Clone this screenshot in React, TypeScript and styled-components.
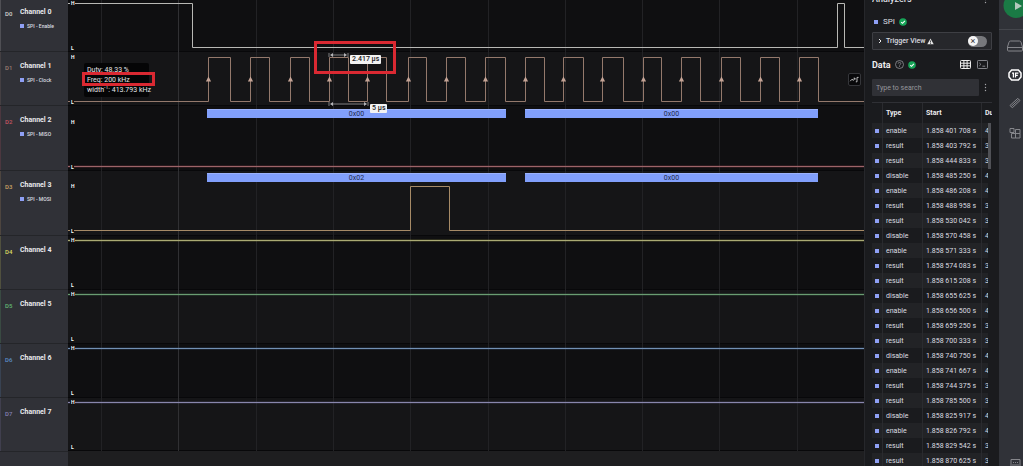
import React from "react";
import styled, { createGlobalStyle } from "styled-components";

const GlobalStyle = createGlobalStyle`
  * { box-sizing: border-box; }
  body { margin: 0; background: #101113; color: #dcdde0; font-family: Roboto, "Liberation Sans", sans-serif; font-size: 7px; }
  button, input { font: inherit; color: inherit; }
`;

const Shell = styled.main`
  display: grid;
  grid-template-columns: 68px minmax(0, 1fr) 135px 24px;
  height: 100vh;
  overflow: hidden;
`;

const Channels = styled.aside`
  background: #303137;
  overflow: hidden;
`;

const ChannelRow = styled.section<{ $tint: string; $tall?: boolean; $first?: boolean }>`
  display: grid;
  grid-template-columns: 20px 1fr;
  align-content: start;
  row-gap: 3px;
  height: ${(p) => (p.$first ? 52 : p.$tall ? 65 : 54)}px;
  padding-top: ${(p) => (p.$first ? 6 : 8)}px;
  border-bottom: 1px solid #242529;
  box-shadow: inset 1px 0 ${(p) => p.$tint}30;
  line-height: 13px;
`;

const ChannelId = styled.span<{ $tint: string }>`
  padding: 1px 0 0 5px;
  font-size: 6px;
  font-weight: 500;
  color: ${(p) => p.$tint};
`;

const ChannelName = styled.h2`
  margin: 0;
  font-size: 7px;
  font-weight: 700;
  white-space: nowrap;
  color: #e8e9ec;
`;

const ChannelTag = styled.div`
  grid-column: 2;
  display: flex;
  align-items: center;
  gap: 3px;
  font-size: 5px;
  font-weight: 500;
  line-height: 6px;
  white-space: nowrap;
`;

const Dot = styled.span<{ $size?: number }>`
  flex: none;
  width: ${(p) => p.$size ?? 4}px;
  height: ${(p) => p.$size ?? 4}px;
  background: #8fa0f5;
`;

const Graph = styled.section`
  position: relative;
  overflow: hidden;
  background: #1e1e20;
`;

const Plot = styled.svg`
  display: block;
  width: 100%;
  height: 100%;
  font-family: Roboto, "Liberation Sans", sans-serif;
`;

const Measure = styled.div`
  position: absolute;
  top: 63px;
  left: 16px;
  width: 65px;
  height: 34px;
  padding: 2px 3px;
  border-radius: 2px;
  background: #050506;
  color: #e6e6e8;
  font-size: 7px;
  line-height: 10px;
  white-space: nowrap;
  sup { font-size: 5px; line-height: 0; }
`;

const Mark = styled.div<{ $x: number; $y: number; $w: number; $h: number }>`
  position: absolute;
  left: ${(p) => p.$x}px;
  top: ${(p) => p.$y}px;
  width: ${(p) => p.$w}px;
  height: ${(p) => p.$h}px;
  border: 3px solid #da2932;
`;

const Tip = styled.div<{ $x: number; $y: number }>`
  position: absolute;
  left: ${(p) => p.$x}px;
  top: ${(p) => p.$y}px;
  padding: 0 2px;
  border-radius: 1px;
  background: #f3f3f3;
  color: #18181a;
  font-size: 7px;
  font-weight: 500;
  line-height: 9px;
  white-space: nowrap;
`;

const EdgeButton = styled.button`
  position: absolute;
  top: 73px;
  right: 3px;
  width: 13px;
  height: 13px;
  padding: 0;
  border: 1px solid #35363a;
  border-radius: 2px;
  background: #08080a;
  svg { display: block; }
`;

const Panel = styled.aside`
  display: flex;
  flex-direction: column;
  padding-left: 7px;
  border-left: 1px solid #26272b;
  background: #1a1b1e;
  overflow: hidden;
`;

const PanelHead = styled.header`
  display: flex;
  flex: none;
  align-items: flex-end;
  justify-content: space-between;
  height: 4px;
  padding-right: 12px;
  overflow: hidden;
  h2 { margin: 0; font-size: 9px; line-height: 10px; font-weight: 500; }
`;

const IconButton = styled.button`
  display: flex;
  align-items: center;
  justify-content: center;
  padding: 0;
  border: 0;
  background: none;
`;

const Analyzer = styled.div`
  display: flex;
  flex: none;
  align-items: center;
  gap: 4px;
  height: 28px;
  padding: 8px 0 0 2px;
  font-size: 8px;
  line-height: 12px;
  ${Dot} { margin-right: 1px; }
`;

const Trigger = styled.div`
  display: flex;
  flex: none;
  align-items: center;
  height: 18px;
  margin-right: 7px;
  padding: 0 4px 0 5px;
  border: 1px solid #3e3f44;
  border-radius: 1px;
  background: #26272b;
`;

const TriggerButton = styled.button`
  display: flex;
  flex: 1;
  align-items: center;
  gap: 4px;
  padding: 0;
  border: 0;
  background: none;
  font-size: 7px;
  font-weight: 500;
  white-space: nowrap;
  span { margin-right: -2px; }
`;

const Toggle = styled.input`
  appearance: none;
  display: grid;
  align-items: center;
  width: 19px;
  height: 11px;
  margin: 0;
  border-radius: 6px;
  background: #77787c;
  &::before {
    content: "×";
    width: 10px;
    height: 10px;
    border-radius: 50%;
    background: #f4f4f4;
    color: #333;
    font-size: 9px;
    line-height: 10px;
    text-align: center;
  }
`;

const DataHead = styled.div`
  display: flex;
  flex: none;
  align-items: center;
  gap: 4px;
  height: 29px;
  padding-right: 11px;
  h2 { margin: 0; font-size: 9px; font-weight: 700; color: #eee; }
`;

const Views = styled.div`
  display: flex;
  gap: 6px;
  margin-left: auto;
`;

const Search = styled.div`
  display: flex;
  flex: none;
  gap: 5px;
  padding-right: 12px;
  input {
    flex: 1;
    min-width: 0;
    height: 17px;
    padding: 0 4px;
    border: 0;
    border-radius: 1px;
    background: #303136;
    font-size: 7px;
    &::placeholder { color: #96979c; opacity: 1; }
  }
`;

const TableWrap = styled.div`
  position: relative;
  flex: 1;
  margin: 6px 7px 0 0;
  border-top: 1px solid #2f3035;
  overflow: hidden;
`;

const Thumb = styled.div`
  position: absolute;
  top: 20px;
  right: 1px;
  width: 3px;
  height: 46px;
  background: #505156;
`;

const Table = styled.table`
  width: 100%;
  table-layout: fixed;
  border-collapse: separate;
  border-spacing: 0;
  line-height: 12px;
  white-space: nowrap;
  th, td { height: 15px; padding: 0 0 0 3px; overflow: hidden; text-align: left; border-left: 1px solid #2a2b2f; }
  th:first-child, td:first-child { border-left: 0; }
  th { height: 20px; font-weight: 700; color: #ececee; }
  tbody tr:nth-child(odd) td { background: #222326; }
  td:last-child { border-right: 4px solid #1a1b1e; }
`;

const Rail = styled.nav`
  position: relative;
  display: flex;
  flex-direction: column;
  align-items: center;
  background: #303238;
  overflow: hidden;
  width: 32px;
`;

const RailButton = styled.button<{ $h: number; $line?: boolean; $end?: boolean }>`
  display: flex;
  flex: none;
  align-items: center;
  justify-content: center;
  width: 32px;
  height: ${(p) => p.$h}px;
  padding: 0;
  border: 0;
  border-bottom: ${(p) => (p.$line ? "1px solid #44464c" : "0")};
  margin-top: ${(p) => (p.$end ? "auto" : "0")};
  background: none;
`;

type Channel = { tint: string; tag?: string; top: number; high: number; line: "H" | "L" | "W" };

const channels: Channel[] = [
  { tint: "#d5d5d2", tag: "Enable", top: 0, high: 3, line: "W" },
  { tint: "#9c7f73", tag: "Clock", top: 52, high: 57, line: "W" },
  { tint: "#c65563", tag: "MISO", top: 106, high: 122, line: "L" },
  { tint: "#cba266", tag: "MOSI", top: 171, high: 186, line: "W" },
  { tint: "#dcdc62", top: 236, high: 240, line: "H" },
  { tint: "#62b874", top: 290, high: 294, line: "H" },
  { tint: "#5b8fca", top: 344, high: 348, line: "H" },
  { tint: "#8480b5", top: 398, high: 402, line: "H" },
];

const strokes: Record<number, string> = { 2: "#9c6468", 4: "#aaaa74", 5: "#6a9c72", 6: "#7290b4", 7: "#8886ac" };

const rises = [208, 250, 290, 329, 367, 408, 446, 485, 525, 563, 602, 643, 681, 721, 760, 799];
const falls = [230, 269, 309, 348, 386, 426, 465, 505, 544, 583, 623, 661, 700, 740, 779, 818];
const EDGE = 68;
const FAR = 6000;

const clockPath =
  `M0 101.5` + rises.map((r, i) => `H${r - EDGE + 0.5}V57.5H${falls[i] - EDGE + 0.5}V101.5`).join("") + `H${FAR}`;

const gridLines = Array.from({ length: 60 }, (_, i) => Math.round(101 + i * 77.3) - EDGE);

const bubbles = [
  { x: 139, w: 299, y: 109, text: "0x00" },
  { x: 457, w: 293, y: 109, text: "0x00" },
  { x: 139, w: 299, y: 173, text: "0x02" },
  { x: 457, w: 293, y: 173, text: "0x00" },
];

const rows: [string, string, string][] = [
  ["enable", "401 708", "4"], ["result", "403 792", "3"], ["result", "444 833", "3"],
  ["disable", "485 250", "4"], ["enable", "486 208", "4"], ["result", "488 958", "3"],
  ["result", "530 042", "3"], ["disable", "570 458", "4"], ["enable", "571 333", "4"],
  ["result", "574 083", "3"], ["result", "615 208", "3"], ["disable", "655 625", "4"],
  ["enable", "656 500", "4"], ["result", "659 250", "3"], ["result", "700 333", "3"],
  ["disable", "740 750", "4"], ["enable", "741 667", "4"], ["result", "744 375", "3"],
  ["result", "785 500", "3"], ["disable", "825 917", "4"], ["enable", "826 792", "4"],
  ["result", "829 542", "3"], ["result", "870 625", "3"],
];

const Check = () => (
  <svg width="8" height="8" viewBox="0 0 8 8" aria-hidden="true">
    <circle cx="4" cy="4" r="3.8" fill="#17a558" />
    <path d="M2.2 4.1 3.5 5.3 5.9 2.8" fill="none" stroke="#fff" strokeWidth="1.1" />
  </svg>
);

const Dots = () => (
  <svg width="3" height="9" viewBox="0 0 3 9" fill="#a4a5a9" aria-hidden="true">
    <circle cx="1.5" cy="1.5" r=".7" /><circle cx="1.5" cy="4.5" r=".7" /><circle cx="1.5" cy="7.5" r=".7" />
  </svg>
);

const DoubleArrow = ({ from, to, y }: { from: number; to: number; y: number }) => (
  <g stroke="#99999c" strokeWidth=".8" fill="#b5b5b8">
    <path d={`M${from} ${y - 2}v4M${to} ${y - 2}v4`} />
    <path d={`M${from + 3} ${y}H${to - 3}`} />
    <path stroke="none" d={`M${from + 1} ${y}l3-2v4zM${to - 1} ${y}l-3-2v4z`} />
  </g>
);

const Waveforms = () => (
  <Plot role="img" aria-label="Logic waveforms for channels 0 to 7">
    {channels.map((c, i) => {
      const end = i < 7 ? channels[i + 1].top : 451;
      return (
        <g key={i}>
          <rect x="0" y={c.top} width="100%" height={end - c.top} fill={i % 2 ? "#151517" : "#0f0f11"} />
          <rect x="0" y={end - 1} width="100%" height="1" fill="#08080a" />
        </g>
      );
    })}
    {gridLines.map((x, i) => (
      <rect key={x} x={x} y="0" width="1" height="451" fill={i === 1 ? "#303033" : "#222225"} />
    ))}
    <g fill="none" strokeWidth="1">
      <path stroke="#b8b8b5" d={`M0 3.5H124.5V47.5H769.5V3.5H776.5V47.5H${FAR}`} />
      <path stroke="#94796c" d={clockPath} />
      <path stroke="#a68a66" d={`M0 230.5H342.5V186.5H381.5V230.5H${FAR}`} />
      {channels.map((c, i) => {
        if (c.line === "W") return null;
        const y = c.line === "H" ? c.high : c.high + 44;
        return (
          <React.Fragment key={c.tint}>
            <path stroke={c.tint} strokeOpacity=".15" strokeWidth="3" d={`M0 ${y + 0.5}H${FAR}`} />
            <path stroke={strokes[i]} d={`M0 ${y + 0.5}H${FAR}`} />
          </React.Fragment>
        );
      })}
    </g>
    {rises.map((r) => (
      <path key={r} fill="#c5a496" d={`M${r - EDGE + 0.5} 76.5l2.6 5h-5.2z`} />
    ))}
    {channels.map((c, i) => (
      <g key={i} fill="#ffffff" fontSize="5" fontWeight="700">
        <rect x="2" y={c.high - 2} width="5" height="5" fill="#101012" />
        <rect x="2" y={c.high + 43} width="4" height="5" fill="#101012" />
        <text x="3" y={c.high + 2}>H</text>
        <text x="3" y={c.high + 47}>L</text>
      </g>
    ))}
    {bubbles.map((b) => (
      <g key={`${b.x}-${b.y}`}>
        <rect x={b.x} y={b.y} width={b.w} height="9" fill="#819ffb" />
        <rect x={b.x} y={b.y} width={b.w} height="1" fill="#9bb2fb" />
        <text x={b.x + b.w / 2} y={b.y + 7} fill="#20294c" fontSize="7" textAnchor="middle">{b.text}</text>
      </g>
    ))}
    <DoubleArrow from={261} to={280} y={55} />
    <DoubleArrow from={261} to={300} y={104} />
  </Plot>
);

export default function App() {
  return (
    <>
      <GlobalStyle />
      <Shell>
        <Channels>
          {channels.map((c, i) => (
            <ChannelRow key={i} $tint={c.tint} $first={i === 0} $tall={i === 2 || i === 3}>
              <ChannelId $tint={c.tint}>D{i}</ChannelId>
              <ChannelName>Channel {i}</ChannelName>
              {c.tag && <ChannelTag><Dot />SPI - {c.tag}</ChannelTag>}
            </ChannelRow>
          ))}
        </Channels>

        <Graph>
          <Waveforms />
          <Measure>
            <div>Duty: 48.33 %</div>
            <div>Freq: 200 kHz</div>
            <div>width<sup>-1</sup>: 413.793 kHz</div>
          </Measure>
          <Mark $x={14} $y={72} $w={73} $h={14} />
          <Tip $x={282} $y={55}>2.417 µs</Tip>
          <Tip $x={302} $y={104}>5 µs</Tip>
          <Mark $x={246} $y={41} $w={82} $h={33} />
          <EdgeButton aria-label="Edge measurement">
            <svg width="11" height="11" viewBox="0 0 11 11" fill="none" stroke="#c8c8ca" strokeWidth=".9" aria-hidden="true">
              <path d="M1.2 7.2 3 5.2l1.4 1.2L6 4.2M4.6 4.2H6v1.4M6.8 7.8h1.2V3.4h1.6" />
            </svg>
          </EdgeButton>
        </Graph>

        <Panel>
          <PanelHead><h2>Analyzers</h2><IconButton aria-label="Analyzer options"><Dots /></IconButton></PanelHead>
          <Analyzer><Dot />SPI<Check /></Analyzer>
          <Trigger>
            <TriggerButton>
              <svg width="4" height="6" viewBox="0 0 4 6" fill="none" stroke="#eee" strokeWidth="1" aria-hidden="true"><path d="M1 1l2 2-2 2" /></svg>
              <span>Trigger View</span>
              <svg width="7" height="7" viewBox="0 0 7 7" aria-hidden="true">
                <path d="M3.5.5 6.7 6.3H.3z" fill="#e8e8e8" />
                <path d="M3.5 2.5v2M3.5 5v.8" stroke="#27282c" strokeWidth=".8" />
              </svg>
            </TriggerButton>
            <Toggle type="checkbox" role="switch" aria-label="Trigger View" />
          </Trigger>
          <DataHead>
            <h2>Data</h2>
            <IconButton aria-label="Help">
              <svg width="9" height="9" viewBox="0 0 9 9" fill="none" stroke="#929397" strokeWidth=".8" aria-hidden="true">
                <circle cx="4.5" cy="4.5" r="4" />
                <path d="M3.2 3.6c0-1.7 2.6-1.6 2.6 0 0 1-1.3 1-1.3 2M4.5 6.2v.8" />
              </svg>
            </IconButton>
            <Check />
            <Views>
              <IconButton aria-label="Table view">
                <svg width="11" height="9" viewBox="0 0 11 9" fill="none" stroke="#eee" strokeWidth="1" aria-hidden="true">
                  <rect x=".5" y=".5" width="10" height="8" rx=".8" /><path d="M.5 3.2h10M.5 5.8h10M3.9.5v8M7.1.5v8" />
                </svg>
              </IconButton>
              <IconButton aria-label="Terminal view">
                <svg width="11" height="9" viewBox="0 0 11 9" fill="none" stroke="#909196" strokeWidth=".9" aria-hidden="true">
                  <rect x=".5" y=".5" width="10" height="8" rx=".8" /><path d="m2.4 3 1.5 1.4-1.5 1.4M5.4 6.2h2.8" />
                </svg>
              </IconButton>
            </Views>
          </DataHead>
          <Search>
            <input aria-label="Search data" placeholder="Type to search" />
            <IconButton aria-label="Data options"><Dots /></IconButton>
          </Search>
          <TableWrap>
            <Table>
              <colgroup><col style={{ width: 10 }} /><col style={{ width: 40 }} /><col style={{ width: 59 }} /><col /></colgroup>
              <thead><tr><th aria-label="Marker" /><th>Type</th><th>Start</th><th>Du</th></tr></thead>
              <tbody>
                {rows.map(([type, start, duration]) => (
                  <tr key={start}>
                    <td><Dot as="div" /></td><td>{type}</td><td>1.858 {start} s</td><td>{duration}</td>
                  </tr>
                ))}
              </tbody>
            </Table>
            <Thumb />
          </TableWrap>
        </Panel>

        <Rail>
          <RailButton $h={30} $line aria-label="Start capture">
            <svg width="26" height="30" viewBox="0 0 26 30" aria-hidden="true">
              <circle cx="14" cy="5.5" r="12.5" fill="#1a7a45" /><path d="M13 2v8L20 6z" fill="#b4c8bc" />
            </svg>
          </RailButton>
          <RailButton $h={31} aria-label="Device settings">
            <svg width="16" height="12" viewBox="0 0 16 12" fill="none" stroke="#85868b" aria-hidden="true">
              <path d="M3.5 1h9Q13.6 1 14 2.2L15.5 7v3a1 1 0 0 1-1 1h-13a1 1 0 0 1-1-1V7L2 2.2Q2.400 1 3.500 1zM.5 7.500h15" />
            </svg>
          </RailButton>
          <RailButton $h={27} aria-label="Analyzers">
            <svg width="14" height="12" viewBox="0 0 14 12" fill="none" stroke="#fff" strokeWidth="1.5" aria-hidden="true">
              <path d="M3.600 1h6.800L13 4v4l-2.600 3H3.600L1 8V4z" />
              <path strokeWidth="1.200" d="M4 4.200h1.400V8.500M7.500 8.500V4.200h2.900M7.500 6.300h2.300" />
            </svg>
          </RailButton>
          <RailButton $h={30} aria-label="Measurements">
            <svg width="12" height="12" viewBox="0 0 12 12" fill="none" stroke="#85868b" aria-hidden="true">
              <path d="M1 8.500 8.800 1.300 11 3.500 3.300 10.800zM2.300 9.500 9.800 2.500" />
            </svg>
          </RailButton>
          <RailButton $h={30} aria-label="Extensions">
            <svg width="12" height="12" viewBox="0 0 12 12" fill="none" stroke="#85868b" aria-hidden="true">
              <path d="M1 1.500h4v4H1zM6.500 2.500h4.500v4H6.500zM2.500 6.500h4v4.500h-4zM6.500 6.500h4.500V11H6.500z" />
            </svg>
          </RailButton>
          <RailButton $h={8} $end aria-label="Feedback">
            <svg width="11" height="8" viewBox="0 0 11 8" fill="none" stroke="#85868b" aria-hidden="true">
              <path d="M1 8V1.500h9V8M3 4.500h1M5 4.500h1M7 4.500h1M2 7h7" />
            </svg>
          </RailButton>
        </Rail>
      </Shell>
    </>
  );
}
